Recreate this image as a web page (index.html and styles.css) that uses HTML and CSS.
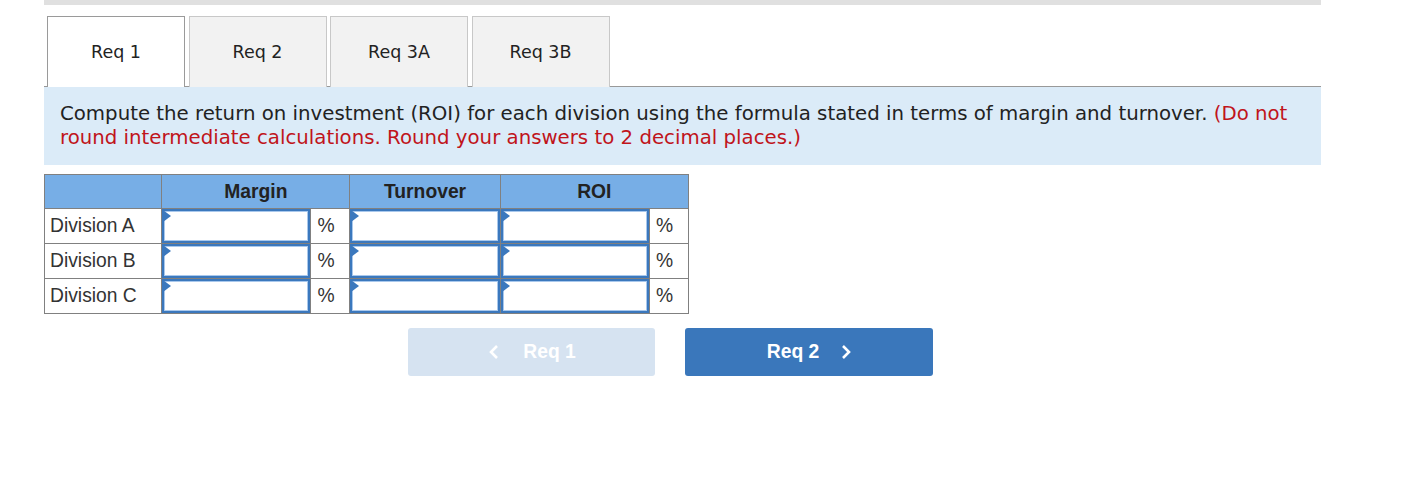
FILE: index.html
```html
<!DOCTYPE html>
<html>
<head>
<meta charset="utf-8">
<link rel="stylesheet" href="styles.css">
</head>
<body>
<div class="page">
  <div class="topbar"></div>
  <div class="tabs">
    <div class="tab active">Req 1</div>
    <div class="tab">Req 2</div>
    <div class="tab">Req 3A</div>
    <div class="tab">Req 3B</div>
  </div>
  <div class="prompt">
    Compute the return on investment (ROI) for each division using the formula stated in terms of margin and turnover. <span class="red">(Do not round intermediate calculations. Round your answers to 2 decimal places.)</span>
  </div>
  <table class="grid">
    <colgroup>
      <col class="c-label"><col class="c-in"><col class="c-pct"><col class="c-in2"><col class="c-in"><col class="c-pct">
    </colgroup>
    <thead>
      <tr><th></th><th colspan="2">Margin</th><th>Turnover</th><th colspan="2">ROI</th></tr>
    </thead>
    <tbody>
      <tr>
        <td class="label">Division A</td>
        <td class="cell"><div class="inp"></div></td><td class="pct">%</td>
        <td class="cell"><div class="inp"></div></td>
        <td class="cell"><div class="inp"></div></td><td class="pct">%</td>
      </tr>
      <tr>
        <td class="label">Division B</td>
        <td class="cell"><div class="inp"></div></td><td class="pct">%</td>
        <td class="cell"><div class="inp"></div></td>
        <td class="cell"><div class="inp"></div></td><td class="pct">%</td>
      </tr>
      <tr>
        <td class="label">Division C</td>
        <td class="cell"><div class="inp"></div></td><td class="pct">%</td>
        <td class="cell"><div class="inp"></div></td>
        <td class="cell"><div class="inp"></div></td><td class="pct">%</td>
      </tr>
    </tbody>
  </table>
  <div class="nav">
    <div class="btn disabled">
      <svg class="chev" width="10" height="16" viewBox="0 0 10 16"><polyline points="8,2 2,8 8,14" fill="none" stroke="#ffffff" stroke-width="2.6"/></svg>
      <span>Req 1</span>
    </div>
    <div class="btn primary">
      <span>Req 2</span>
      <svg class="chev" width="10" height="16" viewBox="0 0 10 16"><polyline points="2,2 8,8 2,14" fill="none" stroke="#ffffff" stroke-width="2.6"/></svg>
    </div>
  </div>
</div>
</body>
</html>
```

FILE: styles.css
```css
html, body {
  margin: 0;
  padding: 0;
  background: #ffffff;
}
.page {
  margin-left: 44px;
  width: 1277px;
}
.topbar {
  height: 5px;
  background: #e0e0e0;
}
.tabs {
  display: flex;
  gap: 3.5px;
  margin-top: 11px;
  padding-left: 3px;
  border-bottom: 1px solid #999999;
  height: 70px;
}
.tab {
  box-sizing: border-box;
  width: 138px;
  height: 71px;
  background: #f2f2f2;
  border: 1px solid #c8c8c8;
  border-bottom: none;
  display: flex;
  align-items: center;
  justify-content: center;
  font-family: "DejaVu Sans", Verdana, sans-serif;
  font-size: 17.5px;
  color: #222222;
}
.tab.active {
  background: #ffffff;
  border-color: #9a9a9a;
  position: relative;
  z-index: 1;
}
.prompt {
  background: #dbebf8;
  padding: 15px 16px 12px 16px;
  font-family: "DejaVu Sans", Verdana, sans-serif;
  font-size: 19.75px;
  line-height: 24px;
  color: #222222;
  height: 51px;
}
.red {
  color: #c0141b;
}
.grid {
  margin-top: 9px;
  border-collapse: collapse;
  width: 645px;
  table-layout: fixed;
  font-family: "Liberation Sans", Arial, sans-serif;
  font-size: 19.3px;
  color: #333333;
}
.c-label { width: 117px; }
.c-in { width: 149px; }
.c-in2 { width: 150px; }
.c-pct { width: 39px; }
.grid th {
  background: #77aee6;
  border: 1px solid #808080;
  height: 33px;
  padding: 0;
  font-weight: bold;
  color: #222222;
  text-align: center;
}
.grid td {
  border: 1px solid #808080;
  height: 34px;
  padding: 0;
}
.grid td.label {
  padding-left: 5px;
}
.grid td.pct {
  padding-left: 6px;
}
.grid td.cell {
  padding: 0;
}
.inp {
  box-sizing: border-box;
  height: 34px;
  border: 2px solid #3b78bd;
  box-shadow: inset 0 0 0 1px #a9c8ec;
  background: #ffffff;
  position: relative;
}
.inp::before {
  content: "";
  position: absolute;
  left: -1px;
  top: -1px;
  border-top: 6px solid transparent;
  border-bottom: 6px solid transparent;
  border-left: 8px solid #3b78bd;
}
.nav {
  display: flex;
  gap: 30px;
  padding-left: 364px;
  margin-top: 14px;
}
.btn {
  box-sizing: border-box;
  width: 247px;
  height: 48px;
  border-radius: 3px;
  display: flex;
  align-items: center;
  justify-content: center;
  gap: 24px;
  font-family: "Liberation Sans", Arial, sans-serif;
  font-weight: bold;
  font-size: 19.3px;
  color: #ffffff;
}
.btn.disabled {
  background: #d6e3f1;
  padding-left: 2px;
}
.btn.primary {
  background: #3a77bb;
  width: 248px;
  gap: 22px;
}
.chev {
  display: block;
}
```
